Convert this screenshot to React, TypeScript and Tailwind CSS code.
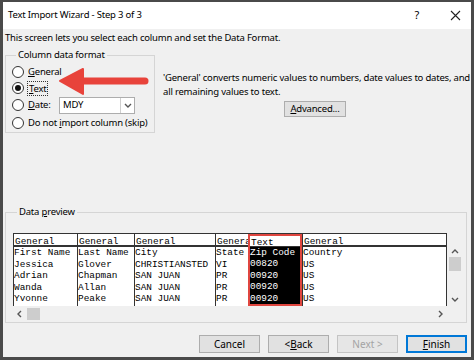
import React from "react";

const ui = "font-['Noto_Sans',sans-serif]";
const mono = "font-['Liberation_Mono',monospace]";

const columns = [
  { w: "w-[64px]", head: "General", rows: ["First Name", "Jessica", "Adrian", "Wanda", "Yvonne"] },
  { w: "w-[57px]", head: "General", rows: ["Last Name", "Glover", "Chapman", "Allan", "Peake"] },
  { w: "w-[81px]", head: "General", rows: ["City", "CHRISTIANSTED", "SAN JUAN", "SAN JUAN", "SAN JUAN"] },
  { w: "w-[33px]", head: "General", rows: ["State", "VI", "PR", "PR", "PR"] },
  { w: "w-[54px]", head: "Text", rows: ["Zip Code", "00820", "00920", "00920", "00920"], sel: true },
  { w: "w-[144px]", head: "General", rows: ["Country", "US", "US", "US", "US"] },
];

function Radio({ checked }: { checked?: boolean }) {
  return (
    <span className="w-[12px] h-[12px] shrink-0 rounded-full border border-[#333] bg-white flex items-center justify-center">
      {checked && <span className="w-[6px] h-[6px] rounded-full bg-[#111]" />}
    </span>
  );
}

function Chevron({ dir }: { dir: "left" | "right" | "up" | "down" }) {
  const pts = {
    left: "5,1 2,4 5,7",
    right: "2,1 5,4 2,7",
    up: "1,5 4,2 7,5",
    down: "1,3 4,6 7,3",
  }[dir];
  return (
    <svg width="8" height="8" viewBox="0 0 8 8">
      <polyline points={pts} fill="none" stroke="#555" strokeWidth="1.4" />
    </svg>
  );
}

function Btn({ children, variant }: { children: React.ReactNode; variant?: "primary" | "disabled" }) {
  const border =
    variant === "primary" ? "border-2 border-[#0078d7]" : variant === "disabled" ? "border border-[#c4c4c4]" : "border border-[#adadad]";
  const color = variant === "disabled" ? "text-[#a3a3a3] bg-[#e6e6e6]" : "text-black bg-[#e1e1e1]";
  return (
    <div className={`w-[61px] h-[18px] flex items-center justify-center text-[10px] ${border} ${color}`}>{children}</div>
  );
}

export default function App() {
  return (
    <div className={`relative w-[474px] h-[360px] bg-[#4a4a4a] pt-[2px] px-[3px] pb-[3px] flex flex-col ${ui} text-black`}>
      {/* title bar */}
      <div className="h-[27px] bg-white flex items-center pl-[5px] pr-[10px] text-[9.5px] tracking-[-0.2px]">
        <span>Text Import Wizard - Step 3 of 3</span>
        <span className="ml-auto mr-[31px] text-[11px]">?</span>
        <svg width="11" height="11" viewBox="0 0 11 11">
          <path d="M1 1L10 10M10 1L1 10" stroke="#222" strokeWidth="1.1" />
        </svg>
      </div>

      {/* body */}
      <div className="flex-1 bg-[#f0f0f0] flex flex-col pt-[2px] pl-[2px] text-[9.5px] tracking-[-0.2px]">
        <div className="h-[14px] leading-[14px] whitespace-nowrap">
          This screen lets you select each column and set the Data Format.
        </div>

        <div className="flex mt-[3px]">
          <fieldset className="w-[150px] h-[85px] border border-[#d5d5d5] pl-[6px]">
            <legend className="ml-[4px] px-[2px] leading-[14px]">Column data format</legend>
            <div className="flex flex-col">
              <div className="h-[16px] mt-[2px] flex items-center gap-[4px]">
                <Radio />
                <span>
                  <u className="underline-offset-1">G</u>eneral
                </span>
              </div>
              <div className="h-[16px] flex items-center gap-[3px]">
                <Radio checked />
                <span className="border border-dotted border-[#333] px-[1px] leading-[13px]">
                  <u className="underline-offset-1">T</u>ext
                </span>
              </div>
              <div className="h-[18px] flex items-center gap-[4px]">
                <Radio />
                <span className="w-[27px]">
                  <u className="underline-offset-1">D</u>ate:
                </span>
                <div className="w-[76px] h-[17px] bg-white border border-[#adadad] flex items-center pl-[3px]">
                  <span>MDY</span>
                  <div className="ml-auto w-[14px] h-full border-l border-[#cfcfcf] flex items-center justify-center">
                    <Chevron dir="down" />
                  </div>
                </div>
              </div>
              <div className="h-[16px] mt-[1px] flex items-center gap-[4px]">
                <Radio />
                <span className="whitespace-nowrap">
                  Do not <u className="underline-offset-1">i</u>mport column (skip)
                </span>
              </div>
            </div>
          </fieldset>

          <div className="ml-[8px] pt-[23px] flex flex-col">
            <div className="leading-[14px] whitespace-nowrap">
              'General' converts numeric values to numbers, date values to dates, and
              <br />
              all remaining values to text.
            </div>
            <div className="ml-[121px] mt-[2px] w-[62px] h-[16px] bg-[#e1e1e1] border border-[#adadad] flex items-center justify-center">
              <span>
                <u className="underline-offset-1">A</u>dvanced...
              </span>
            </div>
          </div>
        </div>

        {/* data preview */}
        <fieldset className="mt-[72px] w-[462px] h-[118px] border border-[#d5d5d5] pl-[7px]">
          <legend className="ml-[4px] px-[2px] leading-[14px]">
            Data <u className="underline-offset-1">p</u>review
          </legend>
          <div className="mt-[14px] w-[450px] h-[88px] grid grid-cols-[434px_16px] grid-rows-[73px_15px] bg-[#f0f0f0] tracking-normal">
            <div className={`flex border-t border-r border-[#333] bg-white ${mono} text-[9.4px] overflow-hidden`}>
              {columns.map((c, i) =>
                c.sel ? (
                  <div key={i} className={`${c.w} shrink-0 border-2 border-[#e0463f] flex flex-col`}>
                    <div className="h-[11px] leading-[13px] pl-[1px] border-b border-[#333] whitespace-nowrap overflow-hidden">{c.head}</div>
                    <div className="flex-1 bg-black text-white">
                      {c.rows.map((r, j) => (
                        <div key={j} className="h-[11.5px] leading-[11.5px] whitespace-nowrap">
                          {r}
                        </div>
                      ))}
                    </div>
                  </div>
                ) : (
                  <div key={i} className={`${c.w} shrink-0 border-l border-[#333] flex flex-col`}>
                    <div className="h-[13px] leading-[15px] pl-[1px] border-b-2 border-[#333] whitespace-nowrap overflow-hidden">{c.head}</div>
                    {c.rows.map((r, j) => (
                      <div key={j} className="h-[11.5px] leading-[11.5px] whitespace-nowrap overflow-hidden">
                        {r}
                      </div>
                    ))}
                  </div>
                )
              )}
            </div>
            <div className="flex flex-col items-center pt-[15px]">
              <Chevron dir="up" />
              <div className="w-[12px] h-[14px] bg-[#cdcdcd] mt-[1px]" />
              <div className="mt-auto mb-[3px]">
                <Chevron dir="down" />
              </div>
            </div>
            <div className="flex items-center pl-[3px]">
              <Chevron dir="left" />
              <div className="w-[13px] h-[12px] bg-[#cdcdcd] ml-[3px]" />
              <div className="ml-auto mr-[2px]">
                <Chevron dir="right" />
              </div>
            </div>
            <div />
          </div>
        </fieldset>

        <div className="mt-auto mb-[4px] mr-[4px] flex justify-end gap-[8px] tracking-normal">
          <Btn>Cancel</Btn>
          <Btn>
            &lt; <u className="underline-offset-1">B</u>ack
          </Btn>
          <Btn variant="disabled">Next &gt;</Btn>
          <Btn variant="primary">
            <u className="underline-offset-1">F</u>inish
          </Btn>
        </div>
      </div>

      {/* red annotation arrow */}
      <svg className="absolute left-[58px] top-[66px]" width="94" height="30" viewBox="0 0 94 30">
        <line x1="24" y1="15" x2="87" y2="15" stroke="#e8433b" strokeWidth="7" strokeLinecap="round" />
        <polygon points="2,15 25,3 25,28" fill="#e8433b" stroke="#e8433b" strokeWidth="2" strokeLinejoin="round" />
      </svg>
    </div>
  );
}
